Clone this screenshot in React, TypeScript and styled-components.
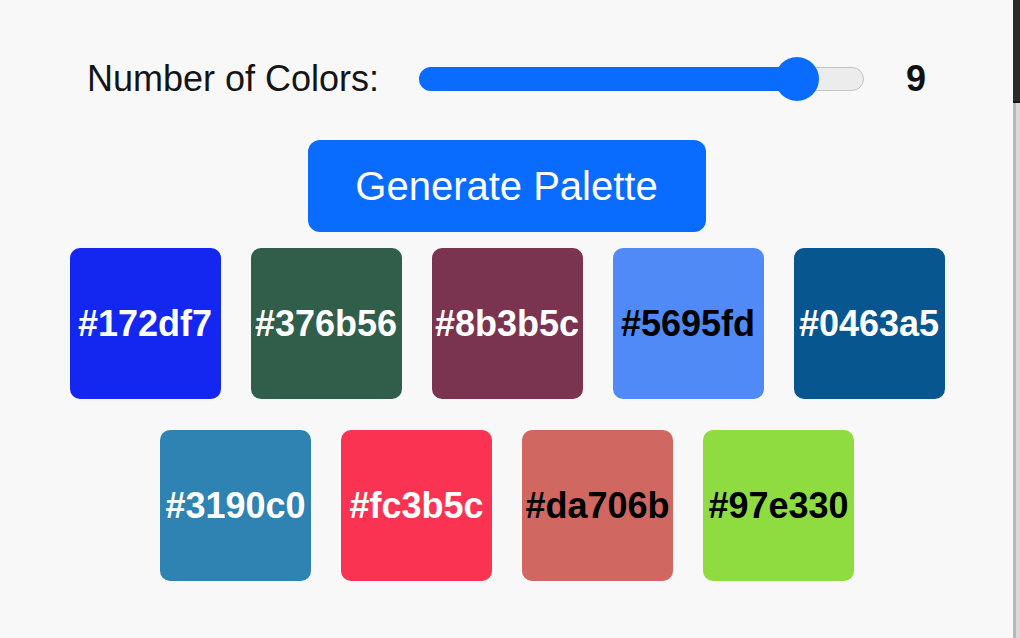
import { useState } from "react";
import styled, { createGlobalStyle } from "styled-components";

const GlobalStyle = createGlobalStyle`
  html, body {
    margin: 0;
    padding: 0;
    background: #f8f8f8;
    font-family: "Liberation Sans", Arial, sans-serif;
  }
`;

const Frame = styled.div`
  display: flex;
  width: 1020px;
  height: 638px;
  overflow: hidden;
`;

const Main = styled.div`
  flex: 1;
  display: flex;
  flex-direction: column;
  align-items: center;
  padding-top: 57px;
`;

const Edge = styled.div`
  width: 7px;
  display: flex;
  flex-direction: column;
`;

const EdgeTop = styled.div`
  height: 101px;
  background: #2a2a2a;
  border-bottom: 2px solid #151515;
`;

const EdgeRest = styled.div`
  flex: 1;
  border-left: 3px solid #b8b8b8;
  background: #dadada;
`;

const Controls = styled.div`
  display: flex;
  align-items: center;
  gap: 40px;
  height: 44px;
`;

const Label = styled.span`
  font-size: 36px;
  color: #141414;
`;

const Value = styled.span`
  font-size: 36px;
  font-weight: bold;
  color: #111;
  width: 20px;
  margin-left: 2px;
`;

const Track = styled.div`
  position: relative;
  width: 445px;
  height: 24px;
  border-radius: 12px;
  background: #ececec;
  border: 1px solid #c4c4c4;
  box-sizing: border-box;
  cursor: pointer;
`;

const Fill = styled.div`
  position: absolute;
  left: -1px;
  top: -1px;
  bottom: -1px;
  border-radius: 12px;
  background: #0a6cfe;
`;

const Thumb = styled.div`
  position: absolute;
  top: 50%;
  width: 44px;
  height: 44px;
  margin-left: -22px;
  margin-top: -22px;
  border-radius: 50%;
  background: #0a6cfe;
`;

const GenerateButton = styled.button`
  margin-top: 39px;
  width: 398px;
  height: 92px;
  border: none;
  border-radius: 12px;
  background: #0a6cfe;
  color: #fff;
  font-family: inherit;
  font-size: 40px;
  cursor: pointer;
`;

const Palette = styled.div`
  margin-top: 16px;
  margin-left: 1px;
  width: 875px;
  display: flex;
  flex-wrap: wrap;
  justify-content: center;
  column-gap: 30px;
  row-gap: 31px;
`;

const Swatch = styled.div<{ $bg: string; $dark: boolean }>`
  width: 151px;
  height: 151px;
  border-radius: 10px;
  background: ${(p) => p.$bg};
  color: ${(p) => (p.$dark ? "#000" : "#fff")};
  display: flex;
  align-items: center;
  justify-content: center;
  font-size: 36px;
  font-weight: bold;
`;

// hex shown on the swatch, and the tone it shows up as on screen
const initialColors: { hex: string; shown: string }[] = [
  { hex: "#172df7", shown: "#1427f0" },
  { hex: "#376b56", shown: "#305e4b" },
  { hex: "#8b3b5c", shown: "#7b3450" },
  { hex: "#5695fd", shown: "#4f8af6" },
  { hex: "#0463a5", shown: "#07568f" },
  { hex: "#3190c0", shown: "#2e83b2" },
  { hex: "#fc3b5c", shown: "#fb3353" },
  { hex: "#da706b", shown: "#d06761" },
  { hex: "#97e330", shown: "#8fdc40" },
];

const isLight = (hex: string) => {
  const r = parseInt(hex.slice(1, 3), 16);
  const g = parseInt(hex.slice(3, 5), 16);
  const b = parseInt(hex.slice(5, 7), 16);
  return 0.299 * r + 0.587 * g + 0.114 * b > 140;
};

const randomColor = () => {
  const hex =
    "#" +
    Math.floor(Math.random() * 0xffffff)
      .toString(16)
      .padStart(6, "0");
  return { hex, shown: hex };
};

const MIN = 1;
const MAX = 10;

function App() {
  const [count, setCount] = useState(9);
  const [colors, setColors] = useState(initialColors);

  const pct = (count - MIN) / (MAX - MIN);
  // thumb travels inside the track, 22px in from each end
  const thumbX = 22 + pct * (445 - 44);

  const handleTrack = (e: React.MouseEvent<HTMLDivElement>) => {
    const rect = e.currentTarget.getBoundingClientRect();
    const ratio = Math.min(1, Math.max(0, (e.clientX - rect.left - 22) / (rect.width - 44)));
    setCount(Math.round(MIN + ratio * (MAX - MIN)));
  };

  const generate = () => {
    setColors(Array.from({ length: count }, randomColor));
  };

  return (
    <Frame>
      <GlobalStyle />
      <Main>
        <Controls>
          <Label>Number of Colors:</Label>
          <Track onClick={handleTrack}>
            <Fill style={{ width: thumbX + 1 }} />
            <Thumb style={{ left: thumbX - 1 }} />
          </Track>
          <Value>{count}</Value>
        </Controls>
        <GenerateButton onClick={generate}>Generate Palette</GenerateButton>
        <Palette>
          {colors.map((c, i) => (
            <Swatch key={i} $bg={c.shown} $dark={isLight(c.hex)}>
              {c.hex}
            </Swatch>
          ))}
        </Palette>
      </Main>
      <Edge>
        <EdgeTop />
        <EdgeRest />
      </Edge>
    </Frame>
  );
}

export default App;
